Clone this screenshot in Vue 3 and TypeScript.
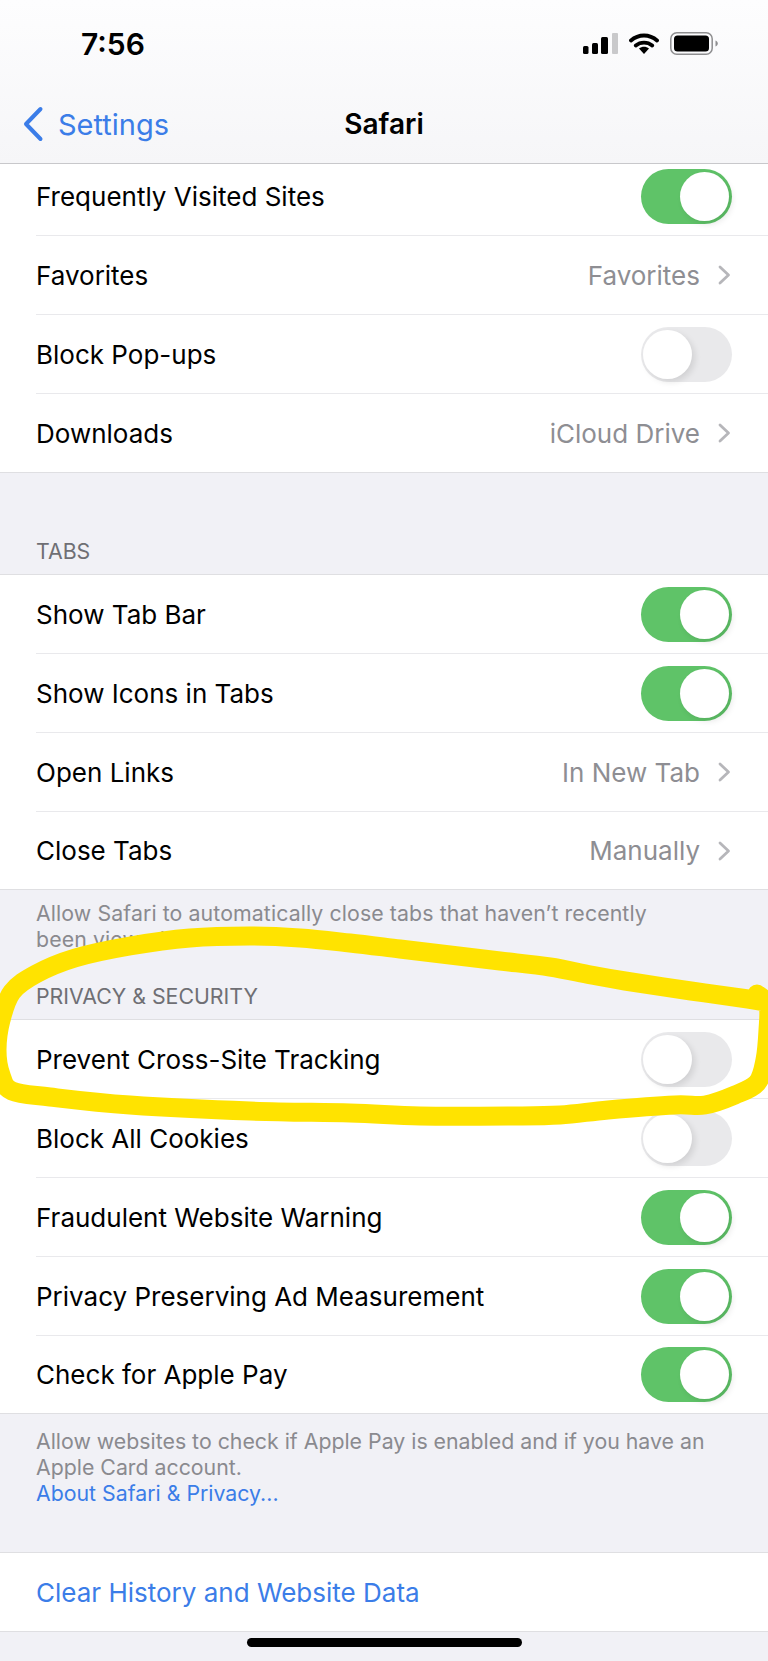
<script setup lang="ts">
interface Row { label: string; on?: boolean; value?: string }
const top: Row[] = [
  { label: 'Frequently Visited Sites', on: true },
  { label: 'Favorites', value: 'Favorites' },
  { label: 'Block Pop-ups', on: false },
  { label: 'Downloads', value: 'iCloud Drive' },
]
const tabs: Row[] = [
  { label: 'Show Tab Bar', on: true },
  { label: 'Show Icons in Tabs', on: true },
  { label: 'Open Links', value: 'In New Tab' },
  { label: 'Close Tabs', value: 'Manually' },
]
const privacy: Row[] = [
  { label: 'Prevent Cross-Site Tracking', on: false },
  { label: 'Block All Cookies', on: false },
  { label: 'Fraudulent Website Warning', on: true },
  { label: 'Privacy Preserving Ad Measurement', on: true },
  { label: 'Check for Apple Pay', on: true },
]
const groups = [
  { key: 'top', rows: top },
  { key: 'tabs', rows: tabs },
  { key: 'privacy', rows: privacy },
]

// Hand-drawn marker stroke, smoothed through sampled points (Catmull-Rom).
const pts: [number, number][] = [
  [770, 1003], [748, 999], [691, 991], [625, 981], [591, 975], [550, 967], [500, 961], [450, 955],
  [400, 949], [350, 943], [300, 938], [250, 936], [190, 938], [130, 946], [75, 958], [36, 974],
  [12, 992], [1, 1020], [-3, 1050], [1, 1075], [12, 1091], [50, 1097], [130, 1105], [250, 1111],
  [350, 1113], [420, 1116], [508, 1116], [560, 1115], [608, 1110], [675, 1105], [705, 1105],
  [735, 1095], [757, 1083], [765, 1060], [768, 1030], [768, 1005], [757, 994],
]
function smooth(p: [number, number][]): string {
  let d = `M${p[0][0]} ${p[0][1]}`
  for (let i = 0; i < p.length - 1; i++) {
    const a = p[Math.max(i - 1, 0)]
    const b = p[i]
    const c = p[i + 1]
    const e = p[Math.min(i + 2, p.length - 1)]
    const c1x = b[0] + (c[0] - a[0]) / 6
    const c1y = b[1] + (c[1] - a[1]) / 6
    const c2x = c[0] - (e[0] - b[0]) / 6
    const c2y = c[1] - (e[1] - b[1]) / 6
    d += `C${c1x.toFixed(1)} ${c1y.toFixed(1)} ${c2x.toFixed(1)} ${c2y.toFixed(1)} ${c[0]} ${c[1]}`
  }
  return d
}
const scribble = smooth(pts)
</script>

<template>
  <div class="screen">
    <header class="head">
      <div class="status">
        <span class="time">7:56</span>
        <div class="status-icons">
          <svg width="35" height="21" viewBox="0 0 35 21">
            <rect x="0" y="13" width="5.500" height="8" rx="1.500" fill="#000" />
            <rect x="9" y="10" width="6" height="11" rx="1.500" fill="#000" />
            <rect x="18" y="4" width="7" height="17" rx="1.500" fill="#000" />
            <rect x="29" y="0" width="6" height="21" rx="1" fill="#c9c9cb" />
          </svg>
          <svg width="30" height="21" viewBox="0 0 30 21">
            <path d="M2 7.500C9.500 .8 20.500 .8 28 7.500M6.800 12.500C11.500 8.600 18.500 8.600 23.200 12.500" fill="none" stroke="#000" stroke-width="3.800" stroke-linecap="round" />
            <path d="M10 15.500C13 13.300 17 13.300 20 15.500L15 21Z" fill="#000" />
          </svg>
          <svg width="48" height="23" viewBox="0 0 48 23">
            <rect x=".8" y=".8" width="41.400" height="21.400" rx="6" fill="none" stroke="#8e8e90" stroke-width="1.500" />
            <rect x="4" y="3.500" width="35" height="16" rx="3.500" fill="#000" />
            <path d="M45.500 8.500c1.400.5 2.300 1.600 2.300 3s-.9 2.500-2.300 3Z" fill="#8e8e90" />
          </svg>
        </div>
      </div>
      <nav class="nav">
        <div class="back">
          <svg width="22" height="36" viewBox="0 0 22 36">
            <path d="M18.500 3L4 18l14.500 15" fill="none" stroke="#3b7de8" stroke-width="4" stroke-linecap="round" stroke-linejoin="round" />
          </svg>
          <span>Settings</span>
        </div>
        <h1 class="title">Safari</h1>
      </nav>
    </header>

    <template v-for="g in groups" :key="g.key">
      <div v-if="g.key === 'tabs'" class="caption caption-tabs">TABS</div>
      <div v-if="g.key === 'privacy'" class="caption caption-privacy">PRIVACY &amp; SECURITY</div>
      <section class="group" :class="'group-' + g.key">
        <div v-for="r in g.rows" :key="r.label" class="row">
          <div class="row-in">
            <span class="label">{{ r.label }}</span>
            <template v-if="r.value">
              <span class="value">{{ r.value }}</span>
              <svg class="chev" width="13" height="20" viewBox="0 0 13 20">
                <path d="M2 2l8.500 8L2 18" fill="none" stroke="#b6b6ba" stroke-width="2.800" stroke-linecap="round" stroke-linejoin="round" />
              </svg>
            </template>
            <span v-else class="switch" :class="{ on: r.on }"><span class="knob"></span></span>
          </div>
        </div>
      </section>
      <p v-if="g.key === 'tabs'" class="note note-tabs">Allow Safari to automatically close tabs that haven’t recently<br />been viewed.</p>
      <p v-if="g.key === 'privacy'" class="note note-privacy">
        Allow websites to check if Apple Pay is enabled and if you have an<br />Apple Card account.<br /><span class="link">About Safari &amp; Privacy...</span>
      </p>
    </template>

    <section class="group group-clear">
      <div class="row"><div class="row-in"><span class="label link">Clear History and Website Data</span></div></div>
    </section>

    <div class="home"></div>

    <svg class="scribble" width="768" height="240" viewBox="0 920 768 240">
      <path :d="scribble" fill="none" stroke="#ffe300" stroke-width="19" stroke-linecap="round" stroke-linejoin="round" />
    </svg>
  </div>
</template>

<style>
html, body { margin: 0; background: #f1f1f6; }
</style>

<style scoped>
.screen {
  position: relative;
  width: 768px;
  height: 1661px;
  overflow: hidden;
  background: #f1f1f6;
  font-family: Inter, "Liberation Sans", sans-serif;
  color: #000;
}
.head {
  position: relative;
  z-index: 1;
  height: 163px;
  background: linear-gradient(#fdfdfe, #f6f6f8);
  border-bottom: 1px solid #c8c8cb;
}
.status {
  height: 87px;
  display: flex;
  align-items: center;
  justify-content: space-between;
  padding: 0 50px 0 81px;
}
.time { font-size: 30px; font-weight: 600; }
.status-icons { display: flex; align-items: center; gap: 11px; }
.nav {
  position: relative;
  height: 74px;
  display: flex;
  align-items: center;
  justify-content: center;
}
.back {
  position: absolute;
  left: 22px;
  top: 0;
  bottom: 0;
  display: flex;
  align-items: center;
  gap: 14px;
  color: #3b7de8;
  font-size: 29px;
}
.title { margin: 0; font-size: 28px; font-weight: 600; }
.group { background: #fff; }
.group-top { margin-top: -7px; }
.group-top .row:last-child,
.group-tabs .row:last-child,
.group-privacy .row:last-child { border-bottom: 1px solid #dfdfe2; }
.group-tabs, .group-privacy, .group-clear { border-top: 1px solid #dfdfe2; }
.group-clear { border-bottom: 1px solid #dfdfe2; }
.group-tabs .row:last-child .row-in,
.group-privacy .row:last-child .row-in { height: 77px; }
.row { padding-left: 36px; }
.row-in {
  height: 78px;
  padding-right: 36px;
  display: flex;
  align-items: center;
  border-bottom: 1px solid #e9e9ec;
}
.row:last-child .row-in { border-bottom: 0; }
.label { font-size: 26px; flex: 1; white-space: nowrap; }
.label.link, .link { color: #3b7de8; }
.value { font-size: 26px; color: #8e8e93; margin-right: 18px; }
.chev { flex: none; margin-right: 1px; }
.switch {
  position: relative;
  width: 91px;
  height: 55px;
  border-radius: 28px;
  background: #e9e9eb;
  flex: none;
}
.switch.on { background: #5fc368; }
.knob {
  position: absolute;
  left: 2px;
  top: 3px;
  width: 49px;
  height: 49px;
  border-radius: 50%;
  background: #fff;
  box-shadow: 3px 3px 6px rgba(0, 0, 0, 0.1);
}
.switch.on .knob { left: 39px; }
.caption { color: #6f6f74; font-size: 21.300px; padding-left: 36px; }
.caption-tabs { padding-top: 60px; height: 41px; line-height: 37px; }
.caption-privacy { height: 40px; line-height: 34px; }
.note { margin: 0; padding: 10px 36px 0; color: #8a8a8f; font-size: 21.300px; line-height: 26px; box-sizing: border-box; }
.note-tabs { height: 89px; letter-spacing: 0.1px; }
.note-privacy { height: 138px; padding-top: 14px; }
.home {
  position: absolute;
  left: 247px;
  top: 1638px;
  width: 275px;
  height: 9px;
  border-radius: 5px;
  background: #000;
}
.scribble { position: absolute; left: 0; top: 920px; pointer-events: none; }
</style>
